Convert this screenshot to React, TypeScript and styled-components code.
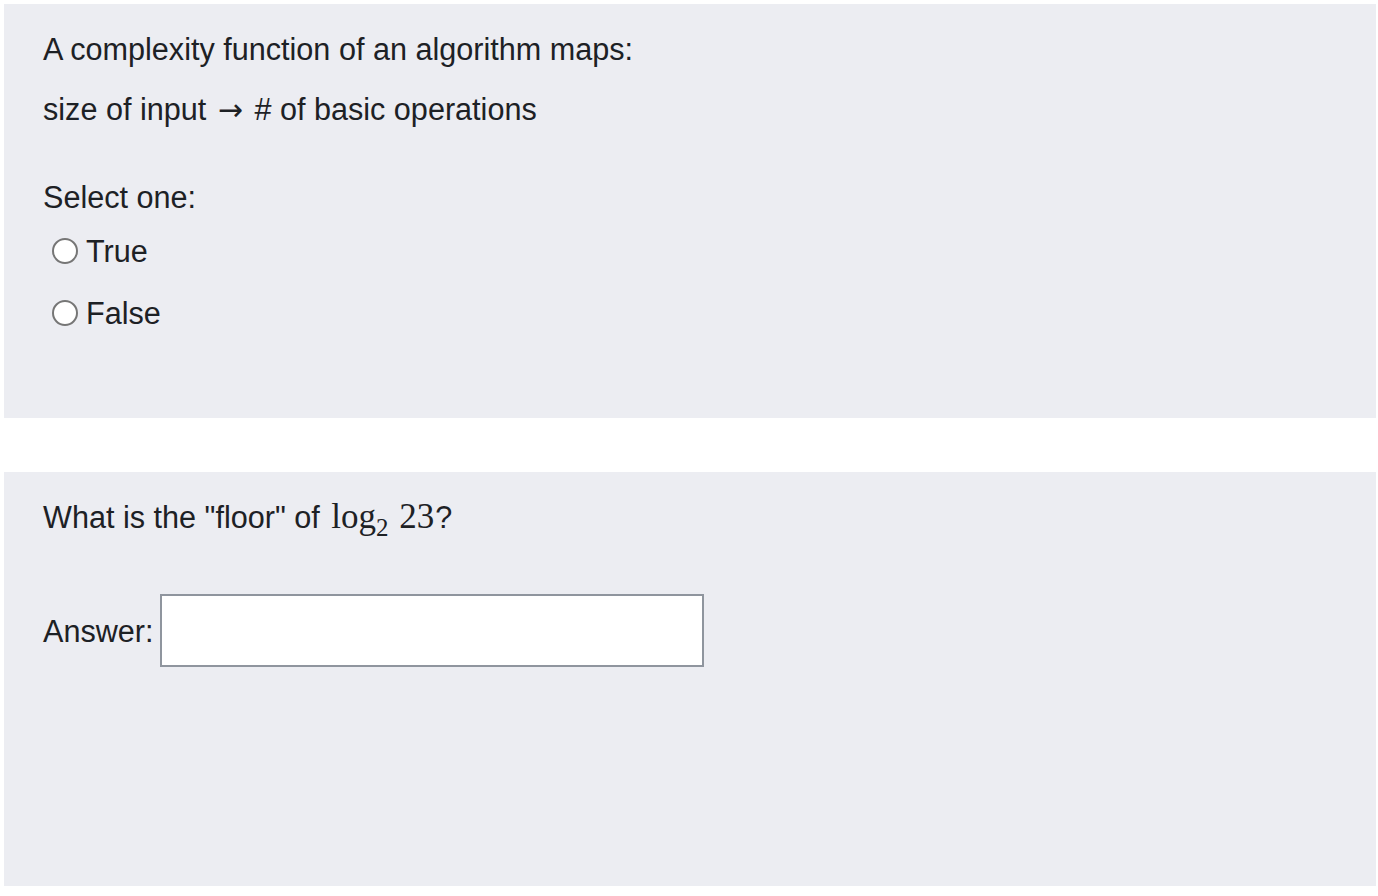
import { createGlobalStyle } from "styled-components";
import styled from "styled-components";

const GlobalStyle = createGlobalStyle`
    html, body {
        margin: 0;
        padding: 0;
        background: #ffffff;
    }
    body {
        font-family: "Liberation Sans", Arial, sans-serif;
        color: #1d2125;
    }
`;

const Page = styled.div`
    padding: 4px 2px 10px 4px;
    display: flex;
    flex-direction: column;
    gap: 54px;
`;

const Question = styled.div`
    background: #ecedf2;
    height: 414px;
    box-sizing: border-box;
    padding: 23px 39px 0;
    font-size: 30.6px;
    line-height: 45px;
`;

const Para = styled.p<{ $gap?: number }>`
    margin: 0 0 ${(p) => p.$gap ?? 0}px;
`;

const Arrow = styled.span`
    font-family: "DejaVu Sans", sans-serif;
    font-size: 30px;
    margin: 0 3px;
`;

const Options = styled.div`
    display: flex;
    flex-direction: column;
    gap: 17px;
`;

const Option = styled.label`
    display: flex;
    align-items: center;
    gap: 8px;
    padding-left: 9px;
`;

const Radio = styled.span`
    width: 26px;
    height: 26px;
    box-sizing: border-box;
    border: 2px solid #767676;
    border-radius: 50%;
    background: #ffffff;
    flex: none;
    margin-top: -2px;
`;

const Math = styled.span`
    font-family: "Liberation Serif", "Times New Roman", serif;
    font-size: 35px;
    line-height: 1;
    margin: 0 1px 0 3px;
    sub {
        font-size: 25px;
        line-height: 1;
        vertical-align: -8px;
        margin-right: 2px;
    }
`;

const AnswerRow = styled.div`
    display: flex;
    align-items: center;
    gap: 6px;
`;

const AnswerBox = styled.input`
    width: 544px;
    height: 73px;
    box-sizing: border-box;
    border: 2px solid #8f959e;
    background: #ffffff;
    font: inherit;
    padding: 0 12px;
    outline: none;
    margin-top: -1px;
`;

const App = () => {
    return (
        <>
            <GlobalStyle />
            <Page>
                <Question>
                    <Para $gap={15}>A complexity function of an algorithm maps:</Para>
                    <Para $gap={43}>
                        size of input <Arrow>→</Arrow> # of basic operations
                    </Para>
                    <Para $gap={9}>Select one:</Para>
                    <Options>
                        <Option>
                            <Radio />
                            True
                        </Option>
                        <Option>
                            <Radio />
                            False
                        </Option>
                    </Options>
                </Question>

                <Question>
                    <Para $gap={55}>
                        What is the "floor" of{" "}
                        <Math>
                            log<sub>2</sub> 23
                        </Math>
                        ?
                    </Para>
                    <AnswerRow>
                        <span>Answer:</span>
                        <AnswerBox type="text" />
                    </AnswerRow>
                </Question>
            </Page>
        </>
    );
};

export default App;
